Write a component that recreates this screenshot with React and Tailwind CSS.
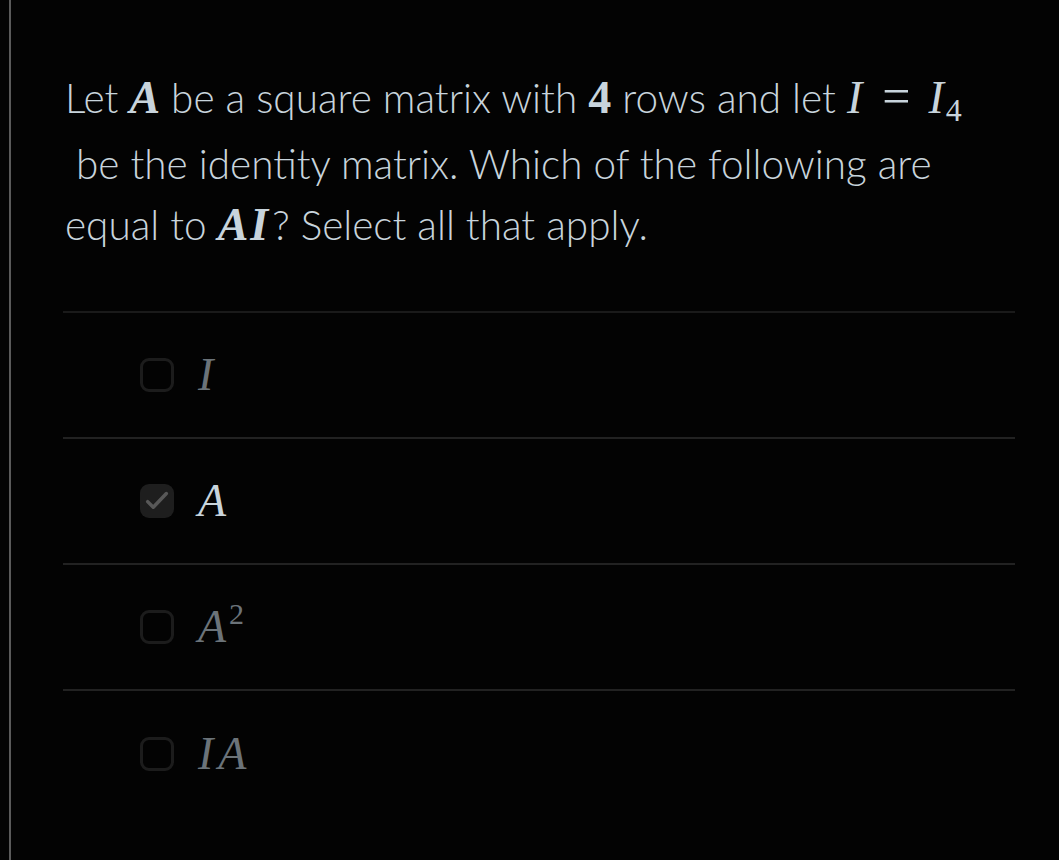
import React from "react";

const serif = { fontFamily: '"Liberation Serif", "DejaVu Serif", serif' };

function M({ children, bold, className = "" }) {
  return (
    <span
      className={`italic ${bold ? "font-bold" : ""} ${className}`}
      style={serif}
    >
      {children}
    </span>
  );
}

function Box({ checked }) {
  if (checked) {
    return (
      <div className="w-[34px] h-[34px] rounded-[9px] bg-[#1e1e1e] flex items-center justify-center">
        <svg width="30" height="30" viewBox="0 0 24 24" fill="none">
          <path d="M4.5 12.5l4.5 4.5L19.5 6" stroke="#585858" strokeWidth="2.8" strokeLinecap="round" strokeLinejoin="round" />
        </svg>
      </div>
    );
  }
  return <div className="w-[34px] h-[34px] rounded-[9px] border-[3px] border-[#1c1c1c]" />;
}

function Row({ checked, last, children }) {
  return (
    <div className={`h-[126px] flex items-center pl-[77px] ${last ? "" : "border-b-2 border-[#222222]"}`}>
      <Box checked={checked} />
      <div
        className={`ml-[24px] text-[46px] leading-none ${checked ? "text-[#c8d4dc]" : "text-[#6b7379]"}`}
        style={serif}
      >
        {children}
      </div>
    </div>
  );
}

export default function App() {
  return (
    <div className="w-[1059px] h-[860px] bg-[#030303] overflow-hidden">
      <div className="ml-[9px] h-full border-l-2 border-[#5a5a5a] pl-[52px] pr-[44px] pt-[66px]">
        <p
          className="text-[40.5px] leading-[61px] text-[#c8d4dc] font-light pl-[2px] whitespace-nowrap"
          style={{ fontFamily: 'Lato, "Open Sans", sans-serif' }}
        >
          Let <M bold className="text-[46px]">A</M> be a square matrix with{" "}
          <span className="font-bold text-[46px]" style={serif}>4</span> rows and let{" "}
          <M className="text-[46px] pr-[2px]">I</M>
          <span className="text-[50px] mx-[18px]" style={serif}>=</span>
          <M className="text-[46px] pr-[2px]">I</M>
          <span className="inline-block text-[32px] relative top-[8px]" style={serif}>4</span>
          <br />
          <span className="pl-[11px]">be the identity matrix. Which of the following are</span>
          <br />
          equal to <M bold className="text-[46px]">A</M>
          <M bold className="text-[46px] pl-[2px] pr-[4px]">I</M>? Select all that apply.
        </p>
        <div className="mt-[56px] border-t-2 border-[#1a1a1a]">
          <Row>
            <M>I</M>
          </Row>
          <Row checked>
            <M>A</M>
          </Row>
          <Row>
            <M>A</M>
            <span className="inline-block text-[30px] relative -top-[18px] ml-[3px]" style={serif}>2</span>
          </Row>
          <Row last>
            <M>I</M>
            <span className="inline-block w-[5px]" />
            <M>A</M>
          </Row>
        </div>
      </div>
    </div>
  );
}
